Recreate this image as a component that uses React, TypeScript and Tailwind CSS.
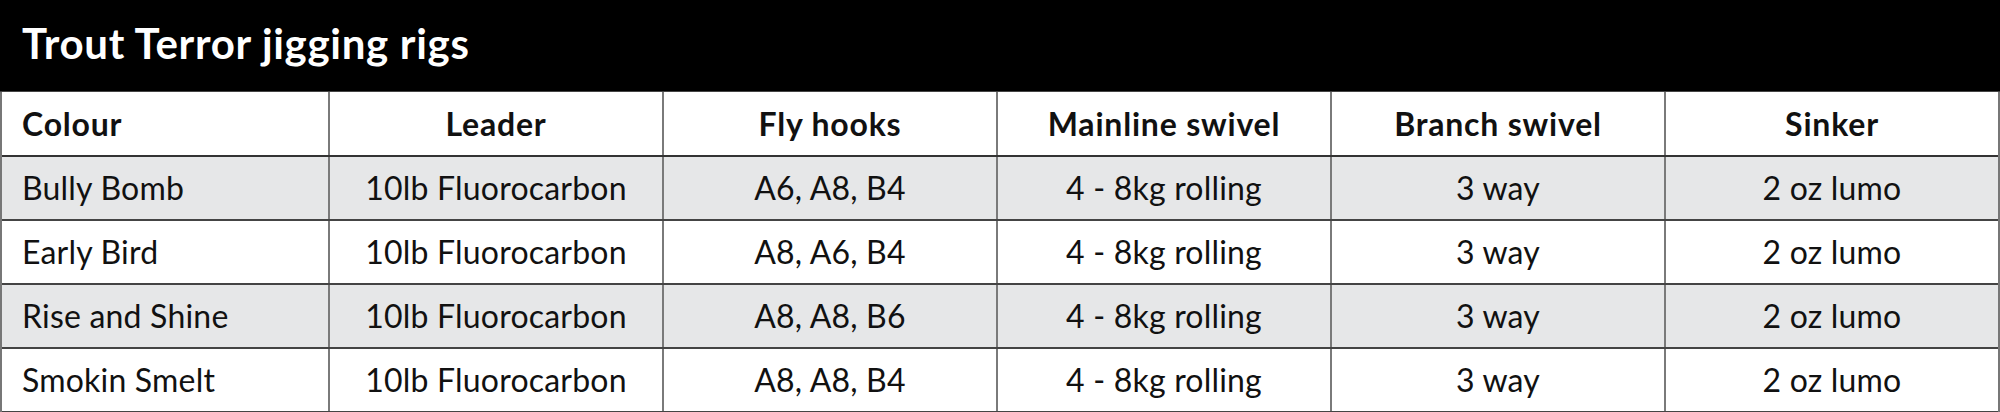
const COLUMNS = ["Colour", "Leader", "Fly hooks", "Mainline swivel", "Branch swivel", "Sinker"];

const ROWS: string[][] = [
  ["Bully Bomb", "10lb Fluorocarbon", "A6, A8, B4", "4 - 8kg rolling", "3 way", "2 oz lumo"],
  ["Early Bird", "10lb Fluorocarbon", "A8, A6, B4", "4 - 8kg rolling", "3 way", "2 oz lumo"],
  ["Rise and Shine", "10lb Fluorocarbon", "A8, A8, B6", "4 - 8kg rolling", "3 way", "2 oz lumo"],
  ["Smokin Smelt", "10lb Fluorocarbon", "A8, A8, B4", "4 - 8kg rolling", "3 way", "2 oz lumo"],
];

function Cell({ text, index, bold }: { text: string; index: number; bold?: boolean }) {
  return (
    <div
      className={`flex items-center ${
        index === 0 ? "justify-start pl-[20px]" : "justify-center border-l-2 border-[#7a7a7a]"
      } ${bold ? "font-bold tracking-[0.8px]" : "font-normal tracking-[0.2px]"}`}
    >
      {text}
    </div>
  );
}

export default function App() {
  return (
    <div className="h-[412px] w-[2000px] overflow-hidden bg-white font-['Lato',sans-serif] text-[#111]">
      <div className="flex h-[92px] items-center border-b border-[#444] bg-black pl-[22px] pb-[4px] text-[42px] font-bold tracking-[0.7px] text-white">
        Trout Terror jigging rigs
      </div>

      <div className="border-x-2 border-[#777]">
        <div className="grid h-[65px] grid-cols-[326px_repeat(5,1fr)] border-b-2 border-[#333] text-[32px]">
          {COLUMNS.map((col, i) => (
            <Cell key={col} text={col} index={i} bold />
          ))}
        </div>

        {ROWS.map((row, r) => (
          <div
            key={row[0]}
            className={`grid h-[64px] grid-cols-[326px_repeat(5,1fr)] border-b-2 border-[#444] text-[32px] ${
              r % 2 === 0 ? "bg-[#e6e7e8]" : "bg-white"
            }`}
          >
            {row.map((cell, i) => (
              <Cell key={`${row[0]}-${i}`} text={cell} index={i} />
            ))}
          </div>
        ))}
      </div>
    </div>
  );
}
